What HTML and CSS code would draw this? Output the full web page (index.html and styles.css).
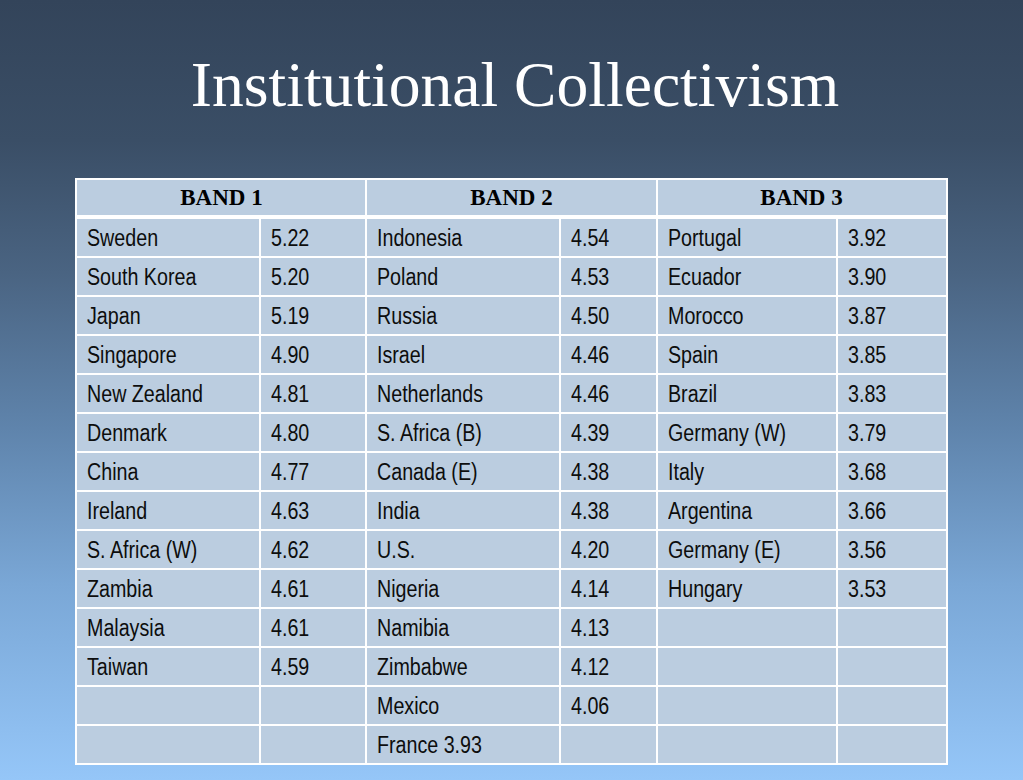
FILE: index.html
```html
<!DOCTYPE html>
<html>
<head>
<meta charset="utf-8">
<title>Institutional Collectivism</title>
<link rel="stylesheet" href="styles.css">
</head>
<body>
<div class="slide">
  <h1 class="title">Institutional Collectivism</h1>
  <table class="bands">
    <colgroup>
      <col class="c1"><col class="c2"><col class="c3"><col class="c4"><col class="c5"><col class="c6">
    </colgroup>
    <thead>
      <tr><th colspan="2">BAND 1</th><th colspan="2">BAND 2</th><th colspan="2">BAND 3</th></tr>
    </thead>
    <tbody>
      <tr><td><span class="t">Sweden</span></td><td><span class="t">5.22</span></td><td><span class="t">Indonesia</span></td><td><span class="t">4.54</span></td><td><span class="t">Portugal</span></td><td><span class="t">3.92</span></td></tr>
      <tr><td><span class="t">South Korea</span></td><td><span class="t">5.20</span></td><td><span class="t">Poland</span></td><td><span class="t">4.53</span></td><td><span class="t">Ecuador</span></td><td><span class="t">3.90</span></td></tr>
      <tr><td><span class="t">Japan</span></td><td><span class="t">5.19</span></td><td><span class="t">Russia</span></td><td><span class="t">4.50</span></td><td><span class="t">Morocco</span></td><td><span class="t">3.87</span></td></tr>
      <tr><td><span class="t">Singapore</span></td><td><span class="t">4.90</span></td><td><span class="t">Israel</span></td><td><span class="t">4.46</span></td><td><span class="t">Spain</span></td><td><span class="t">3.85</span></td></tr>
      <tr><td><span class="t">New Zealand</span></td><td><span class="t">4.81</span></td><td><span class="t">Netherlands</span></td><td><span class="t">4.46</span></td><td><span class="t">Brazil</span></td><td><span class="t">3.83</span></td></tr>
      <tr><td><span class="t">Denmark</span></td><td><span class="t">4.80</span></td><td><span class="t">S. Africa (B)</span></td><td><span class="t">4.39</span></td><td><span class="t">Germany (W)</span></td><td><span class="t">3.79</span></td></tr>
      <tr><td><span class="t">China</span></td><td><span class="t">4.77</span></td><td><span class="t">Canada (E)</span></td><td><span class="t">4.38</span></td><td><span class="t">Italy</span></td><td><span class="t">3.68</span></td></tr>
      <tr><td><span class="t">Ireland</span></td><td><span class="t">4.63</span></td><td><span class="t">India</span></td><td><span class="t">4.38</span></td><td><span class="t">Argentina</span></td><td><span class="t">3.66</span></td></tr>
      <tr><td><span class="t">S. Africa (W)</span></td><td><span class="t">4.62</span></td><td><span class="t">U.S.</span></td><td><span class="t">4.20</span></td><td><span class="t">Germany (E)</span></td><td><span class="t">3.56</span></td></tr>
      <tr><td><span class="t">Zambia</span></td><td><span class="t">4.61</span></td><td><span class="t">Nigeria</span></td><td><span class="t">4.14</span></td><td><span class="t">Hungary</span></td><td><span class="t">3.53</span></td></tr>
      <tr><td><span class="t">Malaysia</span></td><td><span class="t">4.61</span></td><td><span class="t">Namibia</span></td><td><span class="t">4.13</span></td><td></td><td></td></tr>
      <tr><td><span class="t">Taiwan</span></td><td><span class="t">4.59</span></td><td><span class="t">Zimbabwe</span></td><td><span class="t">4.12</span></td><td></td><td></td></tr>
      <tr><td></td><td></td><td><span class="t">Mexico</span></td><td><span class="t">4.06</span></td><td></td><td></td></tr>
      <tr><td></td><td></td><td><span class="t">France 3.93</span></td><td></td><td></td><td></td></tr>
    </tbody>
  </table>
</div>
</body>
</html>
```

FILE: styles.css
```css
html, body {
  margin: 0;
  padding: 0;
}

body {
  width: 1023px;
  height: 780px;
  overflow: hidden;
  background: linear-gradient(to bottom, #33445a 0%, #3a4e66 18%, #4a6482 35%, #5f84ac 55%, #7aa7d6 75%, #95c6f8 100%);
}

.slide {
  display: flex;
  flex-direction: column;
  align-items: center;
}

.title {
  margin: 0;
  padding-top: 49px;
  padding-left: 7px;
  font-family: "Liberation Serif", "Times New Roman", serif;
  font-weight: normal;
  font-size: 63.6px;
  line-height: 71px;
  color: #ffffff;
  text-align: center;
}

.bands {
  margin-top: 58px;
  border-collapse: collapse;
  table-layout: fixed;
  width: 870px;
  border: 2px solid #ffffff;
  background: #bbcde0;
}

.c1 { width: 184px; }
.c2 { width: 106px; }
.c3 { width: 194px; }
.c4 { width: 96px; }
.c5 { width: 180px; }
.c6 { width: 110px; }

.bands th {
  height: 35px;
  padding: 0;
  border: 2px solid #ffffff;
  border-bottom-width: 4px;
  font-family: "Liberation Serif", "Times New Roman", serif;
  font-weight: bold;
  font-size: 23px;
  color: #000000;
  text-align: center;
  vertical-align: middle;
}

.bands td {
  height: 35px;
  padding: 2px 0 0 10px;
  border: 2px solid #ffffff;
  font-family: "Liberation Sans", Arial, sans-serif;
  font-size: 23px;
  color: #0d0d0d;
  text-align: left;
  vertical-align: middle;
  white-space: nowrap;
}

.t {
  display: inline-block;
  transform: scaleX(0.855);
  transform-origin: left center;
}
```
